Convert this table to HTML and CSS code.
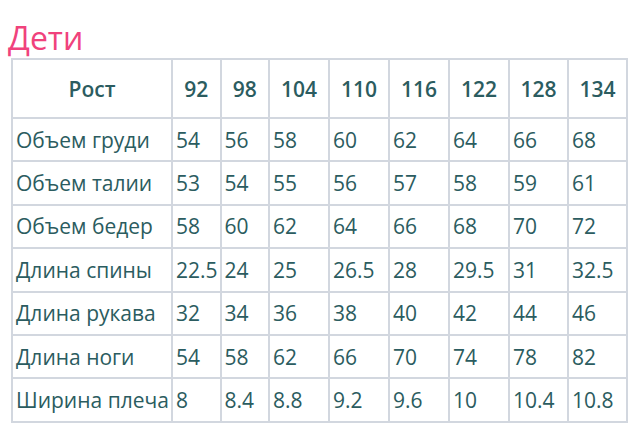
FILE: index.html
```html
<!DOCTYPE html>
<html>
<head>
<meta charset="utf-8">
<link rel="stylesheet" href="styles.css">
</head>
<body>
<h2 class="title">Дети</h2>
<table class="sizes">
<colgroup>
<col class="c-label"><col class="c-s"><col class="c-s"><col class="c-m"><col class="c-m"><col class="c-m"><col class="c-m"><col class="c-n"><col class="c-n">
</colgroup>
<thead>
<tr><th>Рост</th><th>92</th><th>98</th><th>104</th><th>110</th><th>116</th><th>122</th><th>128</th><th>134</th></tr>
</thead>
<tbody>
<tr><td>Объем груди</td><td>54</td><td>56</td><td>58</td><td>60</td><td>62</td><td>64</td><td>66</td><td>68</td></tr>
<tr><td>Объем талии</td><td>53</td><td>54</td><td>55</td><td>56</td><td>57</td><td>58</td><td>59</td><td>61</td></tr>
<tr><td>Объем бедер</td><td>58</td><td>60</td><td>62</td><td>64</td><td>66</td><td>68</td><td>70</td><td>72</td></tr>
<tr><td>Длина спины</td><td>22.5</td><td>24</td><td>25</td><td>26.5</td><td>28</td><td>29.5</td><td>31</td><td>32.5</td></tr>
<tr><td>Длина рукава</td><td>32</td><td>34</td><td>36</td><td>38</td><td>40</td><td>42</td><td>44</td><td>46</td></tr>
<tr><td>Длина ноги</td><td>54</td><td>58</td><td>62</td><td>66</td><td>70</td><td>74</td><td>78</td><td>82</td></tr>
<tr><td>Ширина плеча</td><td>8</td><td>8.4</td><td>8.8</td><td>9.2</td><td>9.6</td><td>10</td><td>10.4</td><td>10.8</td></tr>
</tbody>
</table>
</body>
</html>
```
FILE: styles.css
```css
html, body {
  margin: 0;
  padding: 0;
  background: #ffffff;
}
body {
  font-family: "Open Sans", "Liberation Sans", sans-serif;
  padding: 18px 0 0 8px;
}
.title {
  margin: 0;
  font-weight: 400;
  font-size: 32px;
  line-height: 40px;
  color: #f0427c;
  height: 40px;
}
.sizes {
  margin-left: 3px;
  border-collapse: collapse;
  table-layout: fixed;
  width: 615px;
  color: #2b5c60;
  font-size: 21px;
}
.c-label { width: 160px; }
.c-s { width: 48.5px; }
.c-m { width: 60px; }
.c-n { width: 59px; }
.sizes th, .sizes td {
  border: 2px solid #d2d7df;
  padding: 0 3px;
  white-space: nowrap;
}
.sizes th {
  height: 57px;
  font-weight: 600;
  text-align: center;
}
.sizes td {
  height: 41.4px;
  text-align: left;
}
```
